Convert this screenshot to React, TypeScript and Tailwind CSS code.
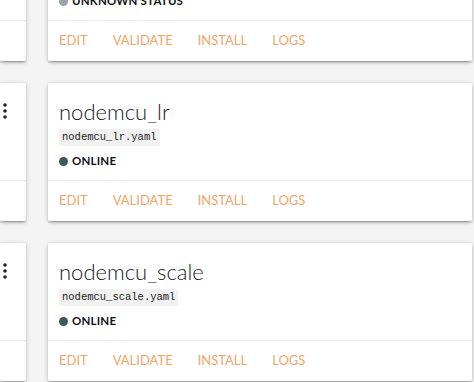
const devices = [
  { name: "", file: "", status: "UNKNOWN STATUS", online: false },
  { name: "nodemcu_lr", file: "nodemcu_lr.yaml", status: "ONLINE", online: true },
  { name: "nodemcu_scale", file: "nodemcu_scale.yaml", status: "ONLINE", online: true },
];

const shadow = "shadow-[0_2px_2px_0_rgba(0,0,0,0.14),0_3px_1px_-2px_rgba(0,0,0,0.12),0_1px_5px_0_rgba(0,0,0,0.2)]";

function Dots() {
  return (
    <svg width="4" height="16" viewBox="0 0 4 16" className="text-[#222]">
      <circle cx="2" cy="2" r="1.8" fill="currentColor" />
      <circle cx="2" cy="8" r="1.8" fill="currentColor" />
      <circle cx="2" cy="14" r="1.8" fill="currentColor" />
    </svg>
  );
}

function DeviceCard({ d }: { d: (typeof devices)[number] }) {
  return (
    <div className={`flex-1 h-[138px] bg-white rounded-[2px] flex flex-col ${shadow}`}>
      <div className="h-[97px] px-[11px] pt-[8px] flex flex-col justify-end pb-[11px]">
        {d.name && (
          <div className="text-[22px] leading-[30px] font-light text-[#212121]">{d.name}</div>
        )}
        {d.file && (
          <div className="self-start mt-[2px] bg-[#f1f1f1] rounded-[2px] px-[3px] h-[17px] leading-[17px] text-[10.5px] text-[#222] font-['Liberation_Mono',monospace]">
            {d.file}
          </div>
        )}
        <div className="flex items-center gap-[4px] mt-[7px] h-[16px]">
          <span className={`w-[9px] h-[9px] rounded-full ${d.online ? "bg-[#3b5a5e]" : "bg-[#9aa4ad]"}`} />
          <span className="text-[11.5px] font-bold text-[#111] tracking-[0.2px]">{d.status}</span>
        </div>
      </div>
      <div className="border-t border-[#ececec] flex-1 flex items-center px-[11px] gap-[25px] text-[13px] text-[#f2a66a]">
        <span>EDIT</span>
        <span>VALIDATE</span>
        <span>INSTALL</span>
        <span>LOGS</span>
      </div>
    </div>
  );
}

export default function App() {
  return (
    <div className="w-[474px] h-[382px] overflow-hidden bg-[#f4f4f4] font-['Lato',sans-serif]">
      <div className="-mt-[77px] flex flex-col gap-[22px] pr-[2px]">
        {devices.map((d, i) => (
          <div key={i} className="flex gap-[22px]">
            <div className={`w-[26px] h-[138px] bg-white rounded-[2px] flex flex-col ${shadow}`}>
              <div className="h-[97px] pl-[3px] pt-[20px]">
                <Dots />
              </div>
              <div className="border-t border-[#ececec] flex-1" />
            </div>
            <DeviceCard d={d} />
          </div>
        ))}
      </div>
    </div>
  );
}
